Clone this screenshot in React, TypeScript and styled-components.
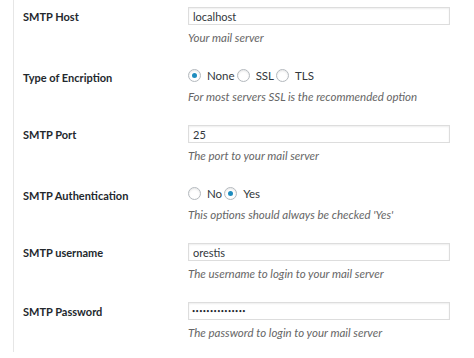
import * as React from 'react'
import styled, { createGlobalStyle } from 'styled-components'

const GlobalStyle = createGlobalStyle`
  body {
    margin: 0;
    background: #fff;
    font-family: Lato, "Open Sans", sans-serif;
  }
`

const Panel = styled.div`
  margin-left: 13px;
  width: 461px;
  height: 352px;
  border-left: 1px solid #e6e6e6;
  box-sizing: border-box;
`

const Row = styled.div`
  display: flex;
  height: 59px;
  padding-top: 7px;
  box-sizing: border-box;
`

const Label = styled.div<{ radio?: boolean }>`
  width: 174px;
  padding-left: 9px;
  box-sizing: border-box;
  font-size: 11px;
  font-weight: bold;
  color: #23282d;
  line-height: 18px;
  padding-top: ${p => (p.radio ? '3px' : '1px')};
`

const Field = styled.div`
  display: flex;
  flex-direction: column;
`

const Input = styled.input`
  width: 262px;
  height: 18px;
  box-sizing: border-box;
  margin: 0;
  padding: 0 4px;
  border: 1px solid #ddd;
  box-shadow: inset 0 1px 2px rgba(0, 0, 0, 0.07);
  font-family: Lato, "Open Sans", sans-serif;
  font-size: 11px;
  color: #32373c;
  outline: none;
`

const PasswordInput = styled(Input)`
  font-size: 5.5px;
  letter-spacing: 0.4px;
  padding-left: 3px;
  color: #23282d;
`

const Desc = styled.div`
  margin-top: 5px;
  font-size: 11.5px;
  font-style: italic;
  color: #666;
  line-height: 16px;
`

const RadioLine = styled.div`
  display: flex;
  align-items: center;
  height: 18px;
  font-size: 11.5px;
  color: #32373c;
`

const Option = styled.label`
  display: flex;
  align-items: center;
  margin-right: 2px;
`

const Circle = styled.span<{ checked?: boolean }>`
  width: 11px;
  height: 11px;
  border-radius: 50%;
  border: 1px solid #b4b9be;
  box-shadow: inset 0 1px 2px rgba(0, 0, 0, 0.1);
  margin-right: 6px;
  display: flex;
  align-items: center;
  justify-content: center;
  &::after {
    content: '';
    display: ${p => (p.checked ? 'block' : 'none')};
    width: 5px;
    height: 5px;
    border-radius: 50%;
    background: #1e8cbe;
  }
`

const RadioGroup = ({ options, value }: { options: string[]; value: string }) => (
  <RadioLine>
    {options.map(o => (
      <Option key={o}>
        <Circle checked={o === value} />
        {o}
      </Option>
    ))}
  </RadioLine>
)

const App = () => (
  <Panel>
    <GlobalStyle />
    <Row>
      <Label>SMTP Host</Label>
      <Field>
        <Input defaultValue="localhost" />
        <Desc>Your mail server</Desc>
      </Field>
    </Row>
    <Row>
      <Label radio>Type of Encription</Label>
      <Field>
        <RadioGroup options={['None', 'SSL', 'TLS']} value="None" />
        <Desc>For most servers SSL is the recommended option</Desc>
      </Field>
    </Row>
    <Row>
      <Label>SMTP Port</Label>
      <Field>
        <Input defaultValue="25" />
        <Desc>The port to your mail server</Desc>
      </Field>
    </Row>
    <Row>
      <Label radio>SMTP Authentication</Label>
      <Field>
        <RadioGroup options={['No', 'Yes']} value="Yes" />
        <Desc>This options should always be checked 'Yes'</Desc>
      </Field>
    </Row>
    <Row>
      <Label>SMTP username</Label>
      <Field>
        <Input defaultValue="orestis" />
        <Desc>The username to login to your mail server</Desc>
      </Field>
    </Row>
    <Row>
      <Label>SMTP Password</Label>
      <Field>
        <PasswordInput type="password" defaultValue="orestispass1234" />
        <Desc>The password to login to your mail server</Desc>
      </Field>
    </Row>
  </Panel>
)

export default App
